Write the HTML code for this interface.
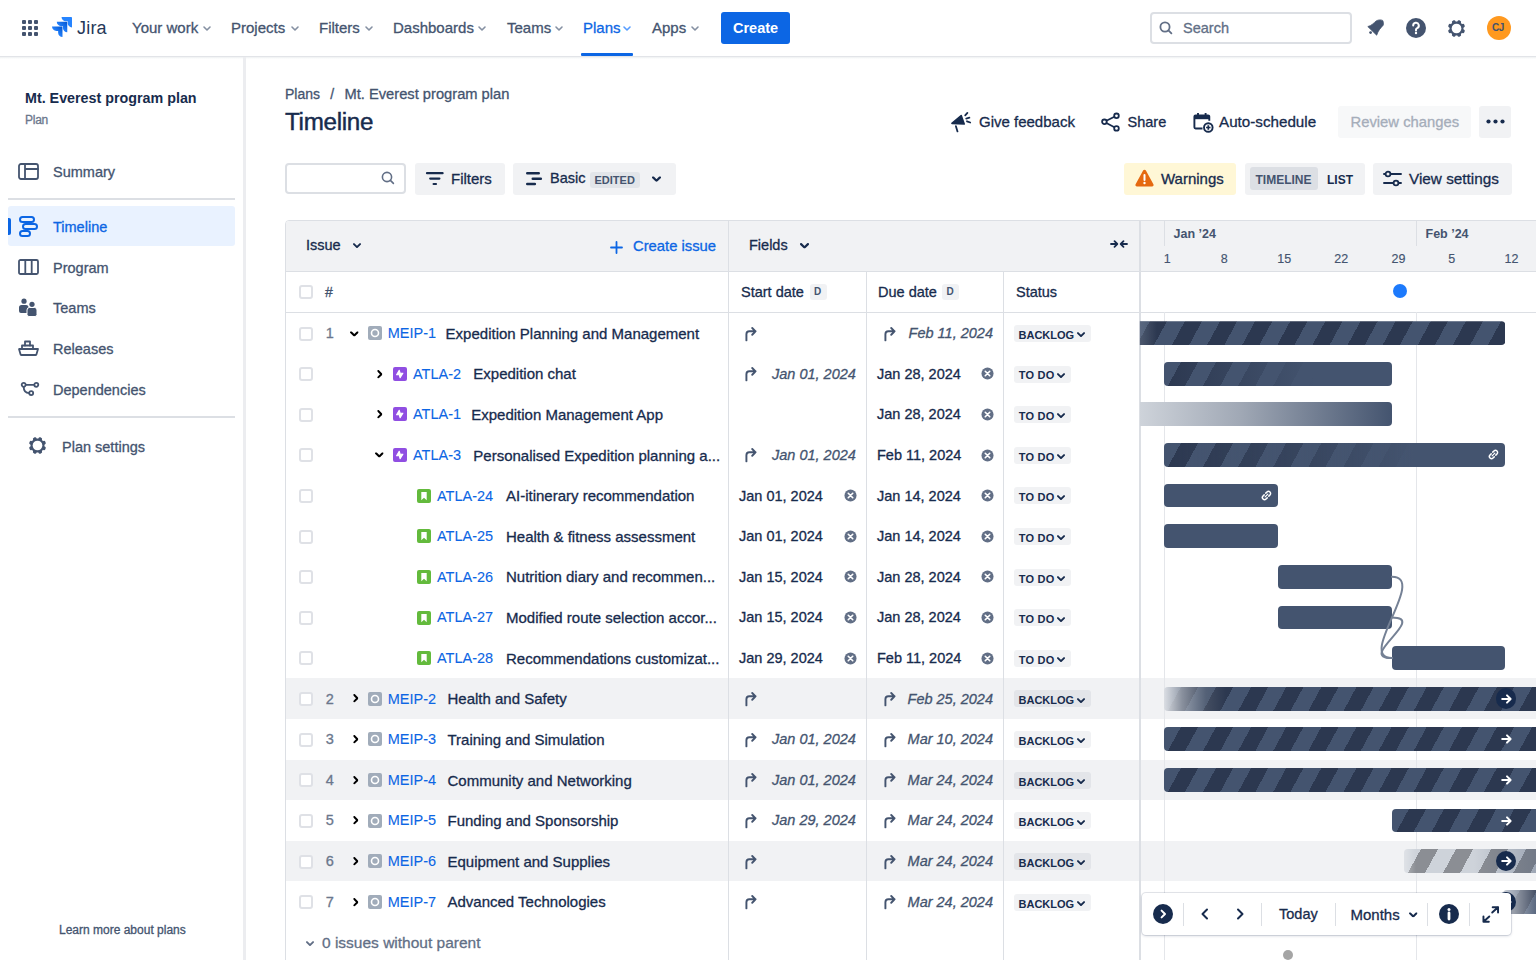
<!DOCTYPE html>
<html><head><meta charset="utf-8"><title>Timeline - Jira</title>
<style>
*{box-sizing:border-box;margin:0;padding:0}
html,body{width:1536px;height:960px;overflow:hidden;background:#fff}
body{font-family:"Liberation Sans",sans-serif;color:#172B4D;position:relative;font-size:14.5px}
.a{position:absolute;white-space:nowrap}
.t{position:absolute;white-space:nowrap;line-height:1;-webkit-text-stroke:0.3px currentColor}
svg{position:absolute;overflow:visible}
.nav{color:#44546F;font-size:15px}
.chev{stroke:#8590A2;stroke-width:1.6;fill:none;stroke-linecap:round;stroke-linejoin:round}
.ic{fill:none;stroke:#44546F;stroke-width:1.8;stroke-linecap:round;stroke-linejoin:round}
.side{color:#44546F;font-size:14.5px}
.btn{position:absolute;background:#F1F2F4;border-radius:3px}
.vl{position:absolute;width:1px;background:#DCDFE4}
.hl{position:absolute;height:1px;background:#DCDFE4}
.row{position:absolute;left:286px;width:1250px;height:40.62px}
.grey{background:#F1F2F4}
.cb{position:absolute;left:299px;width:14px;height:14px;border:2px solid #DFE1E6;border-radius:3px;background:#fff}
.num{color:#6B778C;font-size:14.5px}
.t[style*="bold"]{-webkit-text-stroke:0}
.key{color:#0C66E4;font-size:14.5px;-webkit-text-stroke:0.1px currentColor}
.sum{color:#172B4D;font-size:15px}
.date{color:#172B4D;font-size:14.5px}
.idate{color:#44546F;font-size:14.5px;font-style:italic}
.loz{position:absolute;left:1014px;height:17px;background:rgba(9,30,66,0.058);border-radius:3px;font-weight:bold;font-size:11px;color:#172B4D;letter-spacing:0.1px}
.bar{position:absolute;height:24px;border-radius:4px;background:#44546F}
.stripe{background-image:repeating-linear-gradient(118deg,#2C3850 0 15.55px,#44546F 15.55px 31.1px);background-attachment:fixed}
</style></head><body>

<svg width="0" height="0" style="position:absolute">
<defs>
<symbol id="chevd" viewBox="0 0 10 6"><path d="M1.2 1.2l3.8 3.8 3.8-3.8" fill="none" stroke="currentColor" stroke-width="2.4" stroke-linecap="round" stroke-linejoin="round"/></symbol>
<symbol id="chevr" viewBox="0 0 6 10"><path d="M1.2 1.2l3.8 3.8-3.8 3.8" fill="none" stroke="currentColor" stroke-width="2.4" stroke-linecap="round" stroke-linejoin="round"/></symbol>
<symbol id="redir" viewBox="0 0 14 16"><path d="M2.5 15V8.5a3 3 0 0 1 3-3h6.5M8.5 2l3.5 3.5-3.5 3.5" fill="none" stroke="#44546F" stroke-width="2" stroke-linecap="round" stroke-linejoin="round"/></symbol>
<symbol id="clr" viewBox="0 0 14 14"><circle cx="7" cy="7" r="6.5" fill="#626F86"/><path d="M4.6 4.6l4.8 4.8M9.4 4.6l-4.8 4.8" stroke="#fff" stroke-width="1.8" stroke-linecap="round"/></symbol>
<symbol id="init" viewBox="0 0 14 14"><rect width="14" height="14" rx="2" fill="#A1ACBA"/><circle cx="7" cy="7" r="3.5" fill="none" stroke="#fff" stroke-width="1.6"/></symbol>
<symbol id="epic" viewBox="0 0 14 14"><rect width="14" height="14" rx="2" fill="#904EE2"/><path d="M6.2 3.2L3.6 7.7H6.3L7.1 10.8L9.9 6.3H7.2z" fill="#fff" stroke="#fff" stroke-width="1.1" stroke-linejoin="round"/></symbol>
<symbol id="story" viewBox="0 0 14 14"><rect width="14" height="14" rx="2" fill="#63BA3C"/><path d="M4.3 3h5.4v8.2L7 8.8l-2.7 2.4z" fill="#fff"/></symbol>
<symbol id="gear" viewBox="0 0 20 20"><g fill="#44546F"><circle cx="10" cy="10" r="7.3"/><rect x="8" y="0.9" width="4" height="4.2" rx="1.6" transform="rotate(22.5 10 10)"/><rect x="8" y="0.9" width="4" height="4.2" rx="1.6" transform="rotate(67.5 10 10)"/><rect x="8" y="0.9" width="4" height="4.2" rx="1.6" transform="rotate(112.5 10 10)"/><rect x="8" y="0.9" width="4" height="4.2" rx="1.6" transform="rotate(157.5 10 10)"/><rect x="8" y="0.9" width="4" height="4.2" rx="1.6" transform="rotate(202.5 10 10)"/><rect x="8" y="0.9" width="4" height="4.2" rx="1.6" transform="rotate(247.5 10 10)"/><rect x="8" y="0.9" width="4" height="4.2" rx="1.6" transform="rotate(292.5 10 10)"/><rect x="8" y="0.9" width="4" height="4.2" rx="1.6" transform="rotate(337.5 10 10)"/></g><circle cx="10" cy="10" r="5.1" fill="#fff"/></symbol>
</defs>
</svg>

<!-- ========== TOP NAV ========== -->
<div class="a" style="left:0;top:55.5px;width:1536px;height:1.5px;background:#E2E4E8"></div>
<div class="a" style="left:0;top:57px;width:1536px;height:1.5px;background:linear-gradient(#EEF0F2,#fff)"></div>
<!-- app switcher -->
<svg style="left:22px;top:20px" width="16" height="16" viewBox="0 0 16 16" fill="#44546F">
<rect x="0" y="0" width="4" height="4" rx="1"/><rect x="6" y="0" width="4" height="4" rx="1"/><rect x="12" y="0" width="4" height="4" rx="1"/>
<rect x="0" y="6" width="4" height="4" rx="1"/><rect x="6" y="6" width="4" height="4" rx="1"/><rect x="12" y="6" width="4" height="4" rx="1"/>
<rect x="0" y="12" width="4" height="4" rx="1"/><rect x="6" y="12" width="4" height="4" rx="1"/><rect x="12" y="12" width="4" height="4" rx="1"/>
</svg>
<!-- jira logo -->
<svg style="left:52px;top:17px" width="20" height="20" viewBox="2 2 20 20">
<defs><linearGradient id="jg1" x1="1" y1="0" x2="0.4" y2="0.6"><stop offset="0" stop-color="#0052CC"/><stop offset="1" stop-color="#2684FF"/></linearGradient></defs>
<path fill="#2684FF" d="M11.53 2c0 2.4 1.97 4.35 4.35 4.35h1.78v1.7c0 2.4 1.94 4.34 4.34 4.35V2.84a.84.84 0 0 0-.84-.84H11.53z"/>
<path fill="url(#jg1)" d="M6.77 6.8a4.36 4.36 0 0 0 4.34 4.34h1.8v1.72a4.36 4.36 0 0 0 4.34 4.34V7.63a.84.84 0 0 0-.83-.83H6.77z"/>
<path fill="url(#jg1)" d="M2 11.6c0 2.4 1.95 4.34 4.35 4.34h1.78v1.72c.01 2.39 1.95 4.33 4.34 4.34v-9.57a.84.84 0 0 0-.84-.84H2z"/>
</svg>
<div class="t" style="left:77px;top:18.5px;font-size:18px;color:#253858;letter-spacing:0.2px;-webkit-text-stroke:0">Jira</div>

<div class="t nav" style="left:132px;top:20px">Your work</div>
<svg style="left:203px;top:26px" width="8" height="5" viewBox="0 0 8 5"><path class="chev" d="M1 1l3 3 3-3"/></svg>
<div class="t nav" style="left:231px;top:20px">Projects</div>
<svg style="left:291px;top:26px" width="8" height="5" viewBox="0 0 8 5"><path class="chev" d="M1 1l3 3 3-3"/></svg>
<div class="t nav" style="left:319px;top:20px">Filters</div>
<svg style="left:365px;top:26px" width="8" height="5" viewBox="0 0 8 5"><path class="chev" d="M1 1l3 3 3-3"/></svg>
<div class="t nav" style="left:393px;top:20px">Dashboards</div>
<svg style="left:478px;top:26px" width="8" height="5" viewBox="0 0 8 5"><path class="chev" d="M1 1l3 3 3-3"/></svg>
<div class="t nav" style="left:507px;top:20px">Teams</div>
<svg style="left:555px;top:26px" width="8" height="5" viewBox="0 0 8 5"><path class="chev" d="M1 1l3 3 3-3"/></svg>
<div class="t nav" style="left:583px;top:20px;color:#0C66E4">Plans</div>
<svg style="left:623px;top:26px" width="8" height="5" viewBox="0 0 8 5"><path class="chev" style="stroke:#579DFF" d="M1 1l3 3 3-3"/></svg>
<div class="a" style="left:581px;top:53px;width:52px;height:3px;background:#0C66E4;border-radius:1px"></div>
<div class="t nav" style="left:652px;top:20px">Apps</div>
<svg style="left:691px;top:26px" width="8" height="5" viewBox="0 0 8 5"><path class="chev" d="M1 1l3 3 3-3"/></svg>
<div class="a" style="left:721px;top:12px;width:69px;height:32px;background:#0C66E4;border-radius:3px"></div>
<div class="t" style="left:733px;top:21px;font-size:14.5px;font-weight:bold;color:#fff">Create</div>

<!-- search -->
<div class="a" style="left:1150px;top:12px;width:202px;height:32px;border:2px solid #DCDFE4;border-radius:4px;background:#fff"></div>
<svg style="left:1159px;top:21px" width="14" height="14" viewBox="0 0 14 14"><circle cx="6" cy="6" r="4.6" fill="none" stroke="#626F86" stroke-width="1.8"/><path d="M9.4 9.4l3 3" stroke="#626F86" stroke-width="1.8" stroke-linecap="round"/></svg>
<div class="t" style="left:1183px;top:21px;font-size:14.5px;color:#626F86">Search</div>
<!-- bell -->
<svg style="left:1362px;top:14px" width="28" height="28" viewBox="0 0 28 28"><path fill="#44546F" stroke="#44546F" stroke-width="0.8" stroke-linejoin="round" d="M5.8 12.6C9.5 11.6 11.8 9 14.2 6.9C16.5 5.6 19 5.7 20.6 6.4C21.5 7.8 21.6 9.5 21.2 11.2C19 13.6 16 16.5 14.7 21.2Z"/><circle cx="8.6" cy="18.6" r="1.4" fill="#44546F"/></svg>
<!-- help -->
<svg style="left:1406px;top:18px" width="20" height="20" viewBox="0 0 20 20"><circle cx="10" cy="10" r="10" fill="#44546F"/><path d="M7.2 7.6a2.8 2.8 0 1 1 4 2.5c-.8.4-1.2.9-1.2 1.7v.6" fill="none" stroke="#fff" stroke-width="2" stroke-linecap="round"/><circle cx="10" cy="15" r="1.2" fill="#fff"/></svg>
<!-- settings gear -->
<svg style="left:1446.5px;top:18.5px" width="19" height="19" viewBox="0 0 20 20"><use href="#gear"/></svg>
<!-- avatar -->
<div class="a" style="left:1487px;top:16px;width:24px;height:24px;border-radius:50%;background:#FF991F"></div>
<div class="t" style="left:1492px;top:23px;font-size:10px;font-weight:bold;color:#42526E;letter-spacing:-0.5px">CJ</div>

<!-- ========== SIDEBAR ========== -->
<div class="a" style="left:243px;top:57px;width:3px;height:903px;background:#ECEDF0"></div>
<div class="t" style="left:25px;top:91.1px;font-size:14.3px;font-weight:bold;color:#172B4D;-webkit-text-stroke:0">Mt. Everest program plan</div>
<div class="t" style="left:25px;top:114.2px;font-size:12px;letter-spacing:-0.25px;color:#6B778C">Plan</div>

<svg style="left:18px;top:163px" width="21" height="17" viewBox="0 0 21 17"><rect x="1" y="1" width="19" height="15" rx="2" class="ic" stroke-width="2"/><path d="M7 1v15M7 6h13" class="ic" stroke-width="2"/></svg>
<div class="t side" style="left:53px;top:164.8px">Summary</div>
<div class="a" style="left:8px;top:198px;width:227px;height:2px;background:#DCDFE4"></div>

<div class="a" style="left:8px;top:206px;width:227px;height:40px;background:#E9F2FF;border-radius:3px"></div>
<div class="a" style="left:8px;top:218px;width:3px;height:17px;background:#0C66E4;border-radius:0 2px 2px 0"></div>
<svg style="left:19px;top:216px" width="19" height="21" viewBox="0 0 19 21"><g fill="none" stroke="#0C66E4" stroke-width="2"><rect x="1" y="1" width="14" height="5" rx="2.5"/><rect x="4" y="8" width="14" height="5" rx="2.5"/><rect x="1" y="15" width="10" height="5" rx="2.5"/></g></svg>
<div class="t side" style="left:53px;top:219.8px;color:#0C66E4">Timeline</div>

<svg style="left:18px;top:259px" width="21" height="16" viewBox="0 0 21 16"><rect x="1" y="1" width="19" height="14" rx="1.5" class="ic" stroke-width="2"/><path d="M7.3 1v14M13.7 1v14" class="ic" stroke-width="2"/></svg>
<div class="t side" style="left:53px;top:260.8px">Program</div>

<svg style="left:19px;top:298px" width="19" height="19" viewBox="0 0 19 19" fill="#44546F"><circle cx="5" cy="3.2" r="2.6"/><circle cx="13" cy="6.3" r="2.6"/><path d="M0 9.5a2.5 2.5 0 0 1 2.5-2.5h4.5a2.5 2.5 0 0 1 2.5 2.5V15H2a2 2 0 0 1-2-2z"/><path d="M8 12a2.5 2.5 0 0 1 2.5-2.5h5A2.5 2.5 0 0 1 18 12v4.5a2 2 0 0 1-2 2h-6a2 2 0 0 1-2-2z" stroke="#fff" stroke-width="1"/></svg>
<div class="t side" style="left:53px;top:300.8px">Teams</div>

<svg style="left:18px;top:340px" width="21" height="16" viewBox="0 0 21 16"><g class="ic" stroke-width="2"><path d="M1 9h19l-1.6 5.5a1 1 0 0 1-1 .5H3.6a1 1 0 0 1-1-.5z"/><path d="M4 9V5.5h11V9"/><path d="M7 5.5V1.5h5v4"/></g></svg>
<div class="t side" style="left:53px;top:341.8px">Releases</div>

<svg style="left:20px;top:381px" width="19" height="15" viewBox="0 0 19 15"><g class="ic" stroke-width="1.8"><circle cx="3.7" cy="3.8" r="2"/><circle cx="16.3" cy="3.8" r="2"/><circle cx="11.2" cy="12.1" r="2"/><path d="M5.7 3.8h8.6M3.7 5.8C3.7 10 6 12.1 9.2 12.1"/></g></svg>
<div class="t side" style="left:53px;top:382.8px">Dependencies</div>
<div class="a" style="left:8px;top:415.5px;width:227px;height:2px;background:#DCDFE4"></div>

<svg style="left:27.8px;top:435.8px" width="19" height="19" viewBox="0 0 20 20"><use href="#gear"/></svg>
<div class="t side" style="left:62px;top:439.8px">Plan settings</div>

<div class="t" style="left:59px;top:924px;font-size:12px;color:#44546F">Learn more about plans</div>

<!-- ========== PAGE HEADER ========== -->
<div class="t" style="left:285px;top:87px;font-size:14px;color:#44546F">Plans</div>
<div class="t" style="left:330.2px;top:87px;font-size:14px;color:#44546F">/</div>
<div class="t" style="left:344.5px;top:87px;font-size:14.7px;color:#44546F">Mt. Everest program plan</div>
<div class="t" style="left:285px;top:110.3px;font-size:24.2px;color:#172B4D;letter-spacing:-0.3px;-webkit-text-stroke:0.45px #172B4D">Timeline</div>

<!-- megaphone -->
<svg style="left:940px;top:105px" width="35" height="35" viewBox="0 0 35 35"><path d="M11.9 18.4L21.2 10.6 24.2 19z" fill="#172B4D" stroke="#172B4D" stroke-width="1.6" stroke-linejoin="round"/><g stroke="#172B4D" stroke-width="1.8" stroke-linecap="round"><path d="M15.9 21.2l1.6 5.2"/><path d="M25.2 10.4l2.2-2.5M26.2 13.6l3.2-.9M27 16.3l3.2 1.2"/></g></svg>
<div class="t" style="left:979px;top:114px;font-size:15px;color:#172B4D">Give feedback</div>
<!-- share -->
<svg style="left:1101px;top:112px" width="20" height="20" viewBox="0 0 20 20"><g fill="none" stroke="#172B4D" stroke-width="1.8"><circle cx="15.5" cy="3.8" r="2.3"/><circle cx="3.4" cy="9.8" r="2.3"/><circle cx="15.5" cy="16.4" r="2.3"/><path d="M5.4 8.7l8-4M5.4 11l8 4.2"/></g></svg>
<div class="t" style="left:1127.5px;top:115px;font-size:14.5px;color:#172B4D">Share</div>
<!-- calendar plus -->
<svg style="left:1193px;top:112px" width="21" height="21" viewBox="0 0 21 21"><g fill="none" stroke="#172B4D" stroke-width="1.9"><path d="M9.5 16.5H2.6a1.2 1.2 0 0 1-1.2-1.2V4.6a1.2 1.2 0 0 1 1.2-1.2h12.5a1.2 1.2 0 0 1 1.2 1.2v4.2"/><path d="M5 1v3.2M12.6 1v3.2"/></g><path d="M1.5 4h15v3.2h-15z" fill="#172B4D"/><circle cx="15.3" cy="15.5" r="4.3" fill="none" stroke="#172B4D" stroke-width="1.9"/><path d="M15.3 13.3v4.4M13.1 15.5h4.4" stroke="#172B4D" stroke-width="1.7"/></svg>
<div class="t" style="left:1219px;top:114px;font-size:15.2px;color:#172B4D">Auto-schedule</div>
<div class="a" style="left:1338px;top:106px;width:133px;height:32px;background:#F7F8F9;border-radius:3px"></div>
<div class="t" style="left:1350.5px;top:115px;font-size:14.8px;color:#A5ADBA">Review changes</div>
<div class="a" style="left:1479px;top:106px;width:32px;height:32px;background:#F1F2F4;border-radius:3px"></div>
<svg style="left:1486px;top:119px" width="19" height="5" viewBox="0 0 19 5" fill="#172B4D"><circle cx="2.5" cy="2.5" r="2.1"/><circle cx="9.5" cy="2.5" r="2.1"/><circle cx="16.5" cy="2.5" r="2.1"/></svg>

<!-- toolbar -->
<div class="a" style="left:285px;top:163px;width:121px;height:31px;border:2px solid #DCDFE4;border-radius:4px;background:#fff"></div>
<svg style="left:381px;top:171px" width="14" height="14" viewBox="0 0 14 14"><circle cx="6" cy="6" r="4.6" fill="none" stroke="#626F86" stroke-width="1.6"/><path d="M9.4 9.4l3 3" stroke="#626F86" stroke-width="1.6" stroke-linecap="round"/></svg>
<div class="btn" style="left:415px;top:163px;width:90px;height:32px"></div>
<svg style="left:426px;top:171px" width="18" height="16" viewBox="0 0 18 16"><path d="M1 2.2h15.6M4.2 7.6h9.2M7.6 13h2.4" stroke="#172B4D" stroke-width="2.2" stroke-linecap="round"/></svg>
<div class="t" style="left:451px;top:170.6px;font-size:15px;color:#172B4D">Filters</div>
<div class="btn" style="left:513px;top:163px;width:163px;height:32px"></div>
<svg style="left:526px;top:171px" width="16" height="16" viewBox="0 0 16 16"><path d="M1.3 2.2h11.4M6.8 7.8h8M1.3 13h7.5" stroke="#172B4D" stroke-width="2.6" stroke-linecap="round"/></svg>
<div class="t" style="left:550px;top:170.6px;font-size:14.5px;color:#172B4D">Basic</div>
<div class="a" style="left:590px;top:172px;width:50px;height:16px;background:#DCDFE4;border-radius:3px;opacity:0.7"></div>
<div class="t" style="left:594.5px;top:175px;font-size:11px;font-weight:bold;color:#44546F">EDITED</div>
<svg style="left:652px;top:176px" width="9" height="6" viewBox="0 0 10 6"><use href="#chevd" style="color:#172B4D"/></svg>

<div class="a" style="left:1124px;top:163px;width:112px;height:32px;background:#FFF7D6;border-radius:3px"></div>
<svg style="left:1135px;top:169px" width="19" height="18" viewBox="0 0 19 18"><path d="M8.1 1.6a1.6 1.6 0 0 1 2.8 0l7.5 13.6a1.6 1.6 0 0 1-1.4 2.4H2a1.6 1.6 0 0 1-1.4-2.4z" fill="#E56910"/><path d="M9.5 6v5" stroke="#fff" stroke-width="2" stroke-linecap="round"/><circle cx="9.5" cy="14" r="1.2" fill="#fff"/></svg>
<div class="t" style="left:1161px;top:170.8px;font-size:15px;color:#172B4D">Warnings</div>
<div class="btn" style="left:1244.5px;top:163px;width:120px;height:32px"></div>
<div class="a" style="left:1249.5px;top:167px;width:68px;height:23px;background:#DCDFE4;border-radius:3px"></div>
<div class="t" style="left:1255.5px;top:173.6px;font-size:12px;font-weight:bold;color:#44546F">TIMELINE</div>
<div class="t" style="left:1327px;top:173.6px;font-size:12px;font-weight:bold;color:#172B4D">LIST</div>
<div class="btn" style="left:1372.5px;top:163px;width:139px;height:32px"></div>
<svg style="left:1383px;top:170px" width="19" height="17" viewBox="0 0 19 17"><g fill="none" stroke="#172B4D" stroke-width="1.9" stroke-linecap="round"><path d="M1 4h17M1 13h17"/></g><circle cx="5" cy="4" r="2.4" fill="#F1F2F4" stroke="#172B4D" stroke-width="1.8"/><circle cx="13" cy="13" r="2.4" fill="#F1F2F4" stroke="#172B4D" stroke-width="1.8"/></svg>
<div class="t" style="left:1409px;top:170.6px;font-size:15.3px;color:#172B4D">View settings</div>
<!--PAGEHEADER-->
<!-- ========== TABLE ========== -->
<div class="a" style="left:285px;top:220px;width:1260px;height:760px;border:1px solid #DCDFE4;border-radius:4px 0 0 0"></div>
<div class="a" style="left:286px;top:221px;width:1250px;height:50px;background:#F1F2F4;border-radius:3px 0 0 0"></div>
<div class="hl" style="left:286px;top:270.5px;width:1250px;height:1.5px"></div>
<div class="hl" style="left:286px;top:312px;width:853px"></div>
<div class="hl" style="left:1139px;top:312px;width:397px"></div>
<div class="row grey" style="top:678.38px"></div>
<div class="row grey" style="top:759.62px"></div>
<div class="row grey" style="top:840.86px"></div>
<div class="vl" style="left:727.6px;top:221px;height:739px"></div>
<div class="vl" style="left:865.5px;top:271px;height:689px"></div>
<div class="vl" style="left:1002.5px;top:271px;height:689px"></div>
<div class="vl" style="left:1139px;top:221px;height:739px;width:1.5px;background:#DCDFE4"></div>
<div class="vl" style="left:1164px;top:221px;height:25px"></div>
<div class="vl" style="left:1416px;top:221px;height:25px"></div>
<div class="vl" style="left:1164px;top:312px;height:648px;background:#E4E6EA"></div>
<div class="vl" style="left:1416px;top:312px;height:648px;background:#E4E6EA"></div>
<div class="t" style="left:306px;top:238.32px;font-size:14.5px;color:#172B4D">Issue</div>
<svg style="left:353px;top:243px" width="8" height="5" viewBox="0 0 10 6"><use href="#chevd" style="color:#172B4D"/></svg>
<svg style="left:610px;top:241px" width="13" height="13" viewBox="0 0 13 13"><path d="M6.5 1v11M1 6.5h11" stroke="#0C66E4" stroke-width="1.8" stroke-linecap="round"/></svg>
<div class="t" style="left:633px;top:239.27px;font-size:14.8px;color:#0C66E4">Create issue</div>
<div class="t" style="left:749px;top:238.32px;font-size:14.5px;color:#172B4D">Fields</div>
<svg style="left:800px;top:243px" width="9" height="5.5" viewBox="0 0 10 6"><use href="#chevd" style="color:#172B4D"/></svg>
<svg style="left:1110px;top:240px" width="18" height="8" viewBox="0 0 18 8"><g fill="none" stroke="#172B4D" stroke-width="1.8" stroke-linecap="round" stroke-linejoin="round"><path d="M1 4h6M4.5 1.2L7.3 4 4.5 6.8M17 4h-6M13.5 1.2L10.7 4l2.8 2.8"/></g></svg>
<div class="cb" style="top:284.5px"></div>
<div class="t" style="left:325px;top:284.66px;font-size:14px;color:#44546F">#</div>
<div class="t" style="left:741px;top:284.92px;font-size:14.5px;color:#172B4D">Start date</div>
<div class="a" style="left:809.5px;top:283.5px;width:17px;height:16px;background:#F1F2F4;border-radius:3px"></div>
<div class="t" style="left:814px;top:286.62px;font-size:10px;font-weight:bold;color:#44546F">D</div>
<div class="t" style="left:878px;top:284.92px;font-size:14.5px;color:#172B4D">Due date</div>
<div class="a" style="left:942px;top:283.5px;width:16.5px;height:16px;background:#F1F2F4;border-radius:3px"></div>
<div class="t" style="left:946.5px;top:286.62px;font-size:10px;font-weight:bold;color:#44546F">D</div>
<div class="t" style="left:1016px;top:284.92px;font-size:14.5px;color:#172B4D">Status</div>
<div class="t" style="left:1173.5px;top:227.89px;font-size:12.5px;font-weight:bold;color:#44546F">Jan ’24</div>
<div class="t" style="left:1425.5px;top:227.89px;font-size:12.5px;font-weight:bold;color:#44546F">Feb ’24</div>
<div class="t" style="left:1163.7px;top:253.29px;font-size:12.5px;color:#44546F;-webkit-text-stroke:0.15px #44546F">1</div>
<div class="t" style="left:1220.7px;top:253.29px;font-size:12.5px;color:#44546F;-webkit-text-stroke:0.15px #44546F">8</div>
<div class="t" style="left:1277.2px;top:253.29px;font-size:12.5px;color:#44546F;-webkit-text-stroke:0.15px #44546F">15</div>
<div class="t" style="left:1334.2px;top:253.29px;font-size:12.5px;color:#44546F;-webkit-text-stroke:0.15px #44546F">22</div>
<div class="t" style="left:1391.5px;top:253.29px;font-size:12.5px;color:#44546F;-webkit-text-stroke:0.15px #44546F">29</div>
<div class="t" style="left:1448.2px;top:253.29px;font-size:12.5px;color:#44546F;-webkit-text-stroke:0.15px #44546F">5</div>
<div class="t" style="left:1504.5px;top:253.29px;font-size:12.5px;color:#44546F;-webkit-text-stroke:0.15px #44546F">12</div>
<div class="a" style="left:1392.6px;top:284px;width:14.4px;height:14.4px;border-radius:50%;background:#1D7AFC"></div>
<div class="cb" style="top:326.50px"></div>
<div class="t num" style="left:325.8px;top:326.02px">1</div>
<svg style="left:350px;top:330.50px" width="8.6" height="5.6" viewBox="0 0 10 6"><use href="#chevd" style="color:#000"/></svg>
<svg style="left:368px;top:326.20px" width="14" height="14" viewBox="0 0 14 14"><use href="#init"/></svg>
<div class="t key" style="left:387.7px;top:326.02px">MEIP-1</div>
<div class="t sum" style="left:445.6px;top:325.77px">Expedition Planning and Management</div>
<svg style="left:744px;top:325.60px" width="13.5" height="15.5" viewBox="0 0 14 16"><use href="#redir"/></svg>
<svg style="left:882.5px;top:325.60px" width="13.5" height="15.5" viewBox="0 0 14 16"><use href="#redir"/></svg>
<div class="t idate" style="right:543px;top:326.02px">Feb 11, 2024</div>
<div class="loz" style="top:324.90px;width:77px"></div>
<div class="t" style="left:1018.5px;top:329.83px;font-size:11px;font-weight:bold;color:#172B4D;-webkit-text-stroke:0;letter-spacing:0px">BACKLOG</div>
<svg style="left:1077.2px;top:332.20px" width="8" height="5" viewBox="0 0 10 6"><use href="#chevd" style="color:#172B4D"/></svg>
<div class="cb" style="top:367.12px"></div>
<svg style="left:376.7px;top:369.52px" width="5.5" height="8.4" viewBox="0 0 6 10"><use href="#chevr" style="color:#000"/></svg>
<svg style="left:392.5px;top:366.82px" width="14" height="14" viewBox="0 0 14 14"><use href="#epic"/></svg>
<div class="t key" style="left:413px;top:366.64px">ATLA-2</div>
<div class="t sum" style="left:473.3px;top:366.39px">Expedition chat</div>
<svg style="left:744px;top:366.22px" width="13.5" height="15.5" viewBox="0 0 14 16"><use href="#redir"/></svg>
<div class="t idate" style="left:772px;top:366.64px">Jan 01, 2024</div>
<div class="t date" style="left:877px;top:366.64px">Jan 28, 2024</div>
<svg style="left:981px;top:367.32px" width="13" height="13" viewBox="0 0 14 14"><use href="#clr"/></svg>
<div class="loz" style="top:365.52px;width:57px"></div>
<div class="t" style="left:1018.8px;top:370.45px;font-size:11px;font-weight:bold;color:#172B4D;-webkit-text-stroke:0;letter-spacing:0.2px">TO DO</div>
<svg style="left:1057px;top:372.82px" width="8" height="5" viewBox="0 0 10 6"><use href="#chevd" style="color:#172B4D"/></svg>
<div class="cb" style="top:407.74px"></div>
<svg style="left:376.7px;top:410.14px" width="5.5" height="8.4" viewBox="0 0 6 10"><use href="#chevr" style="color:#000"/></svg>
<svg style="left:392.5px;top:407.44px" width="14" height="14" viewBox="0 0 14 14"><use href="#epic"/></svg>
<div class="t key" style="left:413px;top:407.26px">ATLA-1</div>
<div class="t sum" style="left:471.2px;top:407.01px">Expedition Management App</div>
<div class="t date" style="left:877px;top:407.26px">Jan 28, 2024</div>
<svg style="left:981px;top:407.94px" width="13" height="13" viewBox="0 0 14 14"><use href="#clr"/></svg>
<div class="loz" style="top:406.14px;width:57px"></div>
<div class="t" style="left:1018.8px;top:411.07px;font-size:11px;font-weight:bold;color:#172B4D;-webkit-text-stroke:0;letter-spacing:0.2px">TO DO</div>
<svg style="left:1057px;top:413.44px" width="8" height="5" viewBox="0 0 10 6"><use href="#chevd" style="color:#172B4D"/></svg>
<div class="cb" style="top:448.36px"></div>
<svg style="left:374.5px;top:452.36px" width="8.6" height="5.6" viewBox="0 0 10 6"><use href="#chevd" style="color:#000"/></svg>
<svg style="left:392.5px;top:448.06px" width="14" height="14" viewBox="0 0 14 14"><use href="#epic"/></svg>
<div class="t key" style="left:413px;top:447.88px">ATLA-3</div>
<div class="t sum" style="left:473.3px;top:447.63px">Personalised Expedition planning a...</div>
<svg style="left:744px;top:447.46px" width="13.5" height="15.5" viewBox="0 0 14 16"><use href="#redir"/></svg>
<div class="t idate" style="left:772px;top:447.88px">Jan 01, 2024</div>
<div class="t date" style="left:877px;top:447.88px">Feb 11, 2024</div>
<svg style="left:981px;top:448.56px" width="13" height="13" viewBox="0 0 14 14"><use href="#clr"/></svg>
<div class="loz" style="top:446.76px;width:57px"></div>
<div class="t" style="left:1018.8px;top:451.69px;font-size:11px;font-weight:bold;color:#172B4D;-webkit-text-stroke:0;letter-spacing:0.2px">TO DO</div>
<svg style="left:1057px;top:454.06px" width="8" height="5" viewBox="0 0 10 6"><use href="#chevd" style="color:#172B4D"/></svg>
<div class="cb" style="top:488.98px"></div>
<svg style="left:416.6px;top:488.68px" width="14" height="14" viewBox="0 0 14 14"><use href="#story"/></svg>
<div class="t key" style="left:437px;top:488.5px">ATLA-24</div>
<div class="t sum" style="left:506px;top:488.25px">AI-itinerary recommendation</div>
<div class="t date" style="left:739px;top:488.5px">Jan 01, 2024</div>
<svg style="left:843.8px;top:489.18px" width="13" height="13" viewBox="0 0 14 14"><use href="#clr"/></svg>
<div class="t date" style="left:877px;top:488.5px">Jan 14, 2024</div>
<svg style="left:981px;top:489.18px" width="13" height="13" viewBox="0 0 14 14"><use href="#clr"/></svg>
<div class="loz" style="top:487.38px;width:57px"></div>
<div class="t" style="left:1018.8px;top:492.31px;font-size:11px;font-weight:bold;color:#172B4D;-webkit-text-stroke:0;letter-spacing:0.2px">TO DO</div>
<svg style="left:1057px;top:494.68px" width="8" height="5" viewBox="0 0 10 6"><use href="#chevd" style="color:#172B4D"/></svg>
<div class="cb" style="top:529.60px"></div>
<svg style="left:416.6px;top:529.30px" width="14" height="14" viewBox="0 0 14 14"><use href="#story"/></svg>
<div class="t key" style="left:437px;top:529.12px">ATLA-25</div>
<div class="t sum" style="left:506px;top:528.87px">Health &amp; fitness assessment</div>
<div class="t date" style="left:739px;top:529.12px">Jan 01, 2024</div>
<svg style="left:843.8px;top:529.80px" width="13" height="13" viewBox="0 0 14 14"><use href="#clr"/></svg>
<div class="t date" style="left:877px;top:529.12px">Jan 14, 2024</div>
<svg style="left:981px;top:529.80px" width="13" height="13" viewBox="0 0 14 14"><use href="#clr"/></svg>
<div class="loz" style="top:528.00px;width:57px"></div>
<div class="t" style="left:1018.8px;top:532.93px;font-size:11px;font-weight:bold;color:#172B4D;-webkit-text-stroke:0;letter-spacing:0.2px">TO DO</div>
<svg style="left:1057px;top:535.30px" width="8" height="5" viewBox="0 0 10 6"><use href="#chevd" style="color:#172B4D"/></svg>
<div class="cb" style="top:570.22px"></div>
<svg style="left:416.6px;top:569.92px" width="14" height="14" viewBox="0 0 14 14"><use href="#story"/></svg>
<div class="t key" style="left:437px;top:569.74px">ATLA-26</div>
<div class="t sum" style="left:506px;top:569.49px">Nutrition diary and recommen...</div>
<div class="t date" style="left:739px;top:569.74px">Jan 15, 2024</div>
<svg style="left:843.8px;top:570.42px" width="13" height="13" viewBox="0 0 14 14"><use href="#clr"/></svg>
<div class="t date" style="left:877px;top:569.74px">Jan 28, 2024</div>
<svg style="left:981px;top:570.42px" width="13" height="13" viewBox="0 0 14 14"><use href="#clr"/></svg>
<div class="loz" style="top:568.62px;width:57px"></div>
<div class="t" style="left:1018.8px;top:573.55px;font-size:11px;font-weight:bold;color:#172B4D;-webkit-text-stroke:0;letter-spacing:0.2px">TO DO</div>
<svg style="left:1057px;top:575.92px" width="8" height="5" viewBox="0 0 10 6"><use href="#chevd" style="color:#172B4D"/></svg>
<div class="cb" style="top:610.84px"></div>
<svg style="left:416.6px;top:610.54px" width="14" height="14" viewBox="0 0 14 14"><use href="#story"/></svg>
<div class="t key" style="left:437px;top:610.36px">ATLA-27</div>
<div class="t sum" style="left:506px;top:610.11px">Modified route selection accor...</div>
<div class="t date" style="left:739px;top:610.36px">Jan 15, 2024</div>
<svg style="left:843.8px;top:611.04px" width="13" height="13" viewBox="0 0 14 14"><use href="#clr"/></svg>
<div class="t date" style="left:877px;top:610.36px">Jan 28, 2024</div>
<svg style="left:981px;top:611.04px" width="13" height="13" viewBox="0 0 14 14"><use href="#clr"/></svg>
<div class="loz" style="top:609.24px;width:57px"></div>
<div class="t" style="left:1018.8px;top:614.17px;font-size:11px;font-weight:bold;color:#172B4D;-webkit-text-stroke:0;letter-spacing:0.2px">TO DO</div>
<svg style="left:1057px;top:616.54px" width="8" height="5" viewBox="0 0 10 6"><use href="#chevd" style="color:#172B4D"/></svg>
<div class="cb" style="top:651.46px"></div>
<svg style="left:416.6px;top:651.16px" width="14" height="14" viewBox="0 0 14 14"><use href="#story"/></svg>
<div class="t key" style="left:437px;top:650.98px">ATLA-28</div>
<div class="t sum" style="left:506px;top:650.73px">Recommendations customizat...</div>
<div class="t date" style="left:739px;top:650.98px">Jan 29, 2024</div>
<svg style="left:843.8px;top:651.66px" width="13" height="13" viewBox="0 0 14 14"><use href="#clr"/></svg>
<div class="t date" style="left:877px;top:650.98px">Feb 11, 2024</div>
<svg style="left:981px;top:651.66px" width="13" height="13" viewBox="0 0 14 14"><use href="#clr"/></svg>
<div class="loz" style="top:649.86px;width:57px"></div>
<div class="t" style="left:1018.8px;top:654.79px;font-size:11px;font-weight:bold;color:#172B4D;-webkit-text-stroke:0;letter-spacing:0.2px">TO DO</div>
<svg style="left:1057px;top:657.16px" width="8" height="5" viewBox="0 0 10 6"><use href="#chevd" style="color:#172B4D"/></svg>
<div class="cb" style="top:692.08px"></div>
<div class="t num" style="left:325.8px;top:691.6px">2</div>
<svg style="left:352.5px;top:694.48px" width="5.5" height="8.4" viewBox="0 0 6 10"><use href="#chevr" style="color:#000"/></svg>
<svg style="left:368px;top:691.78px" width="14" height="14" viewBox="0 0 14 14"><use href="#init"/></svg>
<div class="t key" style="left:387.7px;top:691.6px">MEIP-2</div>
<div class="t sum" style="left:447.5px;top:691.35px">Health and Safety</div>
<svg style="left:744px;top:691.18px" width="13.5" height="15.5" viewBox="0 0 14 16"><use href="#redir"/></svg>
<svg style="left:882.5px;top:691.18px" width="13.5" height="15.5" viewBox="0 0 14 16"><use href="#redir"/></svg>
<div class="t idate" style="right:543px;top:691.6px">Feb 25, 2024</div>
<div class="loz" style="top:690.48px;width:77px"></div>
<div class="t" style="left:1018.5px;top:695.41px;font-size:11px;font-weight:bold;color:#172B4D;-webkit-text-stroke:0;letter-spacing:0px">BACKLOG</div>
<svg style="left:1077.2px;top:697.78px" width="8" height="5" viewBox="0 0 10 6"><use href="#chevd" style="color:#172B4D"/></svg>
<div class="cb" style="top:732.70px"></div>
<div class="t num" style="left:325.8px;top:732.22px">3</div>
<svg style="left:352.5px;top:735.10px" width="5.5" height="8.4" viewBox="0 0 6 10"><use href="#chevr" style="color:#000"/></svg>
<svg style="left:368px;top:732.40px" width="14" height="14" viewBox="0 0 14 14"><use href="#init"/></svg>
<div class="t key" style="left:387.7px;top:732.22px">MEIP-3</div>
<div class="t sum" style="left:447.5px;top:731.97px">Training and Simulation</div>
<svg style="left:744px;top:731.80px" width="13.5" height="15.5" viewBox="0 0 14 16"><use href="#redir"/></svg>
<div class="t idate" style="left:772px;top:732.22px">Jan 01, 2024</div>
<svg style="left:882.5px;top:731.80px" width="13.5" height="15.5" viewBox="0 0 14 16"><use href="#redir"/></svg>
<div class="t idate" style="right:543px;top:732.22px">Mar 10, 2024</div>
<div class="loz" style="top:731.10px;width:77px"></div>
<div class="t" style="left:1018.5px;top:736.03px;font-size:11px;font-weight:bold;color:#172B4D;-webkit-text-stroke:0;letter-spacing:0px">BACKLOG</div>
<svg style="left:1077.2px;top:738.40px" width="8" height="5" viewBox="0 0 10 6"><use href="#chevd" style="color:#172B4D"/></svg>
<div class="cb" style="top:773.32px"></div>
<div class="t num" style="left:325.8px;top:772.84px">4</div>
<svg style="left:352.5px;top:775.72px" width="5.5" height="8.4" viewBox="0 0 6 10"><use href="#chevr" style="color:#000"/></svg>
<svg style="left:368px;top:773.02px" width="14" height="14" viewBox="0 0 14 14"><use href="#init"/></svg>
<div class="t key" style="left:387.7px;top:772.84px">MEIP-4</div>
<div class="t sum" style="left:447.5px;top:772.59px">Community and Networking</div>
<svg style="left:744px;top:772.42px" width="13.5" height="15.5" viewBox="0 0 14 16"><use href="#redir"/></svg>
<div class="t idate" style="left:772px;top:772.84px">Jan 01, 2024</div>
<svg style="left:882.5px;top:772.42px" width="13.5" height="15.5" viewBox="0 0 14 16"><use href="#redir"/></svg>
<div class="t idate" style="right:543px;top:772.84px">Mar 24, 2024</div>
<div class="loz" style="top:771.72px;width:77px"></div>
<div class="t" style="left:1018.5px;top:776.65px;font-size:11px;font-weight:bold;color:#172B4D;-webkit-text-stroke:0;letter-spacing:0px">BACKLOG</div>
<svg style="left:1077.2px;top:779.02px" width="8" height="5" viewBox="0 0 10 6"><use href="#chevd" style="color:#172B4D"/></svg>
<div class="cb" style="top:813.94px"></div>
<div class="t num" style="left:325.8px;top:813.46px">5</div>
<svg style="left:352.5px;top:816.34px" width="5.5" height="8.4" viewBox="0 0 6 10"><use href="#chevr" style="color:#000"/></svg>
<svg style="left:368px;top:813.64px" width="14" height="14" viewBox="0 0 14 14"><use href="#init"/></svg>
<div class="t key" style="left:387.7px;top:813.46px">MEIP-5</div>
<div class="t sum" style="left:447.5px;top:813.21px">Funding and Sponsorship</div>
<svg style="left:744px;top:813.04px" width="13.5" height="15.5" viewBox="0 0 14 16"><use href="#redir"/></svg>
<div class="t idate" style="left:772px;top:813.46px">Jan 29, 2024</div>
<svg style="left:882.5px;top:813.04px" width="13.5" height="15.5" viewBox="0 0 14 16"><use href="#redir"/></svg>
<div class="t idate" style="right:543px;top:813.46px">Mar 24, 2024</div>
<div class="loz" style="top:812.34px;width:77px"></div>
<div class="t" style="left:1018.5px;top:817.27px;font-size:11px;font-weight:bold;color:#172B4D;-webkit-text-stroke:0;letter-spacing:0px">BACKLOG</div>
<svg style="left:1077.2px;top:819.64px" width="8" height="5" viewBox="0 0 10 6"><use href="#chevd" style="color:#172B4D"/></svg>
<div class="cb" style="top:854.56px"></div>
<div class="t num" style="left:325.8px;top:854.08px">6</div>
<svg style="left:352.5px;top:856.96px" width="5.5" height="8.4" viewBox="0 0 6 10"><use href="#chevr" style="color:#000"/></svg>
<svg style="left:368px;top:854.26px" width="14" height="14" viewBox="0 0 14 14"><use href="#init"/></svg>
<div class="t key" style="left:387.7px;top:854.08px">MEIP-6</div>
<div class="t sum" style="left:447.5px;top:853.83px">Equipment and Supplies</div>
<svg style="left:744px;top:853.66px" width="13.5" height="15.5" viewBox="0 0 14 16"><use href="#redir"/></svg>
<svg style="left:882.5px;top:853.66px" width="13.5" height="15.5" viewBox="0 0 14 16"><use href="#redir"/></svg>
<div class="t idate" style="right:543px;top:854.08px">Mar 24, 2024</div>
<div class="loz" style="top:852.96px;width:77px"></div>
<div class="t" style="left:1018.5px;top:857.89px;font-size:11px;font-weight:bold;color:#172B4D;-webkit-text-stroke:0;letter-spacing:0px">BACKLOG</div>
<svg style="left:1077.2px;top:860.26px" width="8" height="5" viewBox="0 0 10 6"><use href="#chevd" style="color:#172B4D"/></svg>
<div class="cb" style="top:895.18px"></div>
<div class="t num" style="left:325.8px;top:894.7px">7</div>
<svg style="left:352.5px;top:897.58px" width="5.5" height="8.4" viewBox="0 0 6 10"><use href="#chevr" style="color:#000"/></svg>
<svg style="left:368px;top:894.88px" width="14" height="14" viewBox="0 0 14 14"><use href="#init"/></svg>
<div class="t key" style="left:387.7px;top:894.7px">MEIP-7</div>
<div class="t sum" style="left:447.5px;top:894.45px">Advanced Technologies</div>
<svg style="left:744px;top:894.28px" width="13.5" height="15.5" viewBox="0 0 14 16"><use href="#redir"/></svg>
<svg style="left:882.5px;top:894.28px" width="13.5" height="15.5" viewBox="0 0 14 16"><use href="#redir"/></svg>
<div class="t idate" style="right:543px;top:894.7px">Mar 24, 2024</div>
<div class="loz" style="top:893.58px;width:77px"></div>
<div class="t" style="left:1018.5px;top:898.51px;font-size:11px;font-weight:bold;color:#172B4D;-webkit-text-stroke:0;letter-spacing:0px">BACKLOG</div>
<svg style="left:1077.2px;top:900.88px" width="8" height="5" viewBox="0 0 10 6"><use href="#chevd" style="color:#172B4D"/></svg>
<svg style="left:305.5px;top:940.70px" width="8" height="5" viewBox="0 0 10 6"><use href="#chevd" style="color:#626F86"/></svg>
<div class="t" style="left:322px;top:935.33px;font-size:15.5px;color:#626F86">0 issues without parent</div>

<!--TABLEEND-->
<!-- ========== BARS ========== -->
<div class="a" style="left:1133.2px;top:321.20px;width:372.10px;height:23.8px;border-radius:0;background:linear-gradient(90deg,rgba(120,132,150,.45) 6px,rgba(68,84,111,0) 24px),repeating-linear-gradient(118.5deg,#44546F 0 14.85px,#2C3850 14.85px 29.95px,#44546F 29.95px 30.86px);clip-path:inset(0 0 0 6.7px round 0 4px 4px 0)"></div>
<div class="a" style="left:1164.1px;top:361.82px;width:227.90px;height:23.8px;border-radius:4px;background:linear-gradient(90deg,rgba(68,84,111,0) 0,rgba(68,84,111,.6) 90px,#44546F 150px),repeating-linear-gradient(118.5deg,#44546F 0 14.85px,#2C3850 14.85px 29.95px,#44546F 29.95px 30.86px);"></div>
<div class="a" style="left:1140px;top:402.44px;width:252.00px;height:23.8px;border-radius:0 4px 4px 0;background:linear-gradient(90deg,#CED3DA 0%,#A0A8B5 40%,#44546F 100%);"></div>
<div class="a" style="left:1164.1px;top:443.06px;width:341.20px;height:23.8px;border-radius:4px;background:linear-gradient(90deg,rgba(68,84,111,0) 0,rgba(68,84,111,.5) 150px,#44546F 250px),repeating-linear-gradient(118.5deg,#44546F 0 14.85px,#2C3850 14.85px 29.95px,#44546F 29.95px 30.86px);"></div>
<div class="a" style="left:1164.1px;top:483.68px;width:113.90px;height:23.8px;border-radius:4px;background:#44546F;"></div>
<div class="a" style="left:1164.1px;top:524.30px;width:113.90px;height:23.8px;border-radius:4px;background:#44546F;"></div>
<div class="a" style="left:1278px;top:564.92px;width:113.80px;height:23.8px;border-radius:4px;background:#44546F;"></div>
<div class="a" style="left:1278px;top:605.54px;width:113.80px;height:23.8px;border-radius:4px;background:#44546F;"></div>
<div class="a" style="left:1392.2px;top:646.16px;width:113.10px;height:23.8px;border-radius:4px;background:#44546F;"></div>
<div class="a" style="left:1164.2px;top:686.78px;width:380.80px;height:23.8px;border-radius:4px 0 0 4px;background:linear-gradient(90deg,rgba(235,237,240,.9) 0,rgba(200,204,210,.6) 18px,rgba(120,126,136,.3) 42px,rgba(68,84,111,0) 62px),repeating-linear-gradient(118.5deg,#44546F 0 14.85px,#2C3850 14.85px 29.95px,#44546F 29.95px 30.86px);"></div>
<div class="a" style="left:1164.1px;top:727.40px;width:380.90px;height:23.8px;border-radius:4px 0 0 4px;background:repeating-linear-gradient(118.5deg,#44546F 0 14.85px,#2C3850 14.85px 29.95px,#44546F 29.95px 30.86px);"></div>
<div class="a" style="left:1164.1px;top:768.02px;width:380.90px;height:23.8px;border-radius:4px 0 0 4px;background:repeating-linear-gradient(118.5deg,#44546F 0 14.85px,#2C3850 14.85px 29.95px,#44546F 29.95px 30.86px);"></div>
<div class="a" style="left:1392.1px;top:808.64px;width:152.90px;height:23.8px;border-radius:4px 0 0 4px;background:repeating-linear-gradient(118.5deg,#44546F 0 14.85px,#2C3850 14.85px 29.95px,#44546F 29.95px 30.86px);"></div>
<div class="a" style="left:1404.2px;top:849.26px;width:140.80px;height:23.8px;border-radius:4px 0 0 4px;background:linear-gradient(90deg,rgba(255,255,255,.35) 0,rgba(255,255,255,0) 12px,rgba(68,84,111,0) 70px,rgba(68,84,111,.35) 132px),repeating-linear-gradient(118.5deg,#CED3DA 0 14.85px,#8B8E94 14.85px 29.95px,#CED3DA 29.95px 30.86px);"></div>
<div class="a" style="left:1503px;top:889.88px;width:42.00px;height:23.8px;border-radius:4px 0 0 4px;background:linear-gradient(90deg,rgba(255,255,255,.7) 0,rgba(255,255,255,0) 40px),repeating-linear-gradient(118.5deg,#44546F 0 14.85px,#2C3850 14.85px 29.95px,#44546F 29.95px 30.86px);"></div>
<svg style="left:1487.8px;top:449.46px" width="11" height="11" viewBox="0 0 12 12"><g fill="none" stroke="#fff" stroke-width="1.6" stroke-linecap="round"><path d="M5.2 3.4l1.3-1.3a2.3 2.3 0 0 1 3.3 3.3L8.5 6.7"/><path d="M6.8 8.6L5.5 9.9a2.3 2.3 0 0 1-3.3-3.3L3.5 5.3"/><path d="M4.5 7.5l3-3" stroke-width="1.3"/></g></svg>
<svg style="left:1260.5px;top:490.08px" width="11" height="11" viewBox="0 0 12 12"><g fill="none" stroke="#fff" stroke-width="1.6" stroke-linecap="round"><path d="M5.2 3.4l1.3-1.3a2.3 2.3 0 0 1 3.3 3.3L8.5 6.7"/><path d="M6.8 8.6L5.5 9.9a2.3 2.3 0 0 1-3.3-3.3L3.5 5.3"/><path d="M4.5 7.5l3-3" stroke-width="1.3"/></g></svg>
<div class="a" style="left:1496.10px;top:688.48px;width:20.4px;height:20.4px;border-radius:50%;background:#172B4D"></div>
<svg style="left:1500.80px;top:693.68px" width="11" height="10" viewBox="0 0 11 10"><g fill="none" stroke="#fff" stroke-width="2" stroke-linecap="round" stroke-linejoin="round"><path d="M1.2 5h8.3M6 1.4L9.6 5 6 8.6"/></g></svg>
<svg style="left:1500.80px;top:734.30px" width="11" height="10" viewBox="0 0 11 10"><g fill="none" stroke="#fff" stroke-width="2" stroke-linecap="round" stroke-linejoin="round"><path d="M1.2 5h8.3M6 1.4L9.6 5 6 8.6"/></g></svg>
<svg style="left:1500.80px;top:774.92px" width="11" height="10" viewBox="0 0 11 10"><g fill="none" stroke="#fff" stroke-width="2" stroke-linecap="round" stroke-linejoin="round"><path d="M1.2 5h8.3M6 1.4L9.6 5 6 8.6"/></g></svg>
<svg style="left:1500.80px;top:815.54px" width="11" height="10" viewBox="0 0 11 10"><g fill="none" stroke="#fff" stroke-width="2" stroke-linecap="round" stroke-linejoin="round"><path d="M1.2 5h8.3M6 1.4L9.6 5 6 8.6"/></g></svg>
<div class="a" style="left:1496.10px;top:850.96px;width:20.4px;height:20.4px;border-radius:50%;background:#172B4D"></div>
<svg style="left:1500.80px;top:856.16px" width="11" height="10" viewBox="0 0 11 10"><g fill="none" stroke="#fff" stroke-width="2" stroke-linecap="round" stroke-linejoin="round"><path d="M1.2 5h8.3M6 1.4L9.6 5 6 8.6"/></g></svg>
<div class="a" style="left:1496.10px;top:891.58px;width:20.4px;height:20.4px;border-radius:50%;background:#172B4D"></div>
<svg style="left:1500.80px;top:896.78px" width="11" height="10" viewBox="0 0 11 10"><g fill="none" stroke="#fff" stroke-width="2" stroke-linecap="round" stroke-linejoin="round"><path d="M1.2 5h8.3M6 1.4L9.6 5 6 8.6"/></g></svg>
<svg style="left:0;top:0" width="1536" height="960"><g fill="none" stroke="#758195" stroke-width="2" stroke-linecap="round"><path d="M1391.9 576.8 C1428 576.8, 1356 658.1, 1391.9 658.1"/><path d="M1391.9 617.4 C1428 617.4, 1356 658.1, 1391.9 658.1"/></g></svg>
<div class="a" style="left:1141.7px;top:893px;width:369.5px;height:41.7px;background:#fff;border-radius:4px;box-shadow:0 0 0 1px rgba(9,30,66,.10),0 1px 3px rgba(9,30,66,.18)"></div>
<svg style="left:1153px;top:904px" width="20" height="20" viewBox="0 0 20 20"><circle cx="10" cy="10" r="10" fill="#172B4D"/><path d="M8.6 6.6L12 10l-3.4 3.4" fill="none" stroke="#fff" stroke-width="2" stroke-linecap="round" stroke-linejoin="round"/></svg>
<div class="a" style="left:1182.9px;top:903px;width:1px;height:22.6px;background:#DCDFE4"></div>
<div class="a" style="left:1261.3px;top:903px;width:1px;height:22.6px;background:#DCDFE4"></div>
<div class="a" style="left:1335.2px;top:903px;width:1px;height:22.6px;background:#DCDFE4"></div>
<div class="a" style="left:1427.2px;top:903px;width:1px;height:22.6px;background:#DCDFE4"></div>
<div class="a" style="left:1468.8px;top:903px;width:1px;height:22.6px;background:#DCDFE4"></div>
<svg style="left:1200px;top:908px" width="9" height="12" viewBox="0 0 9 12"><path d="M7 1.5L2.5 6 7 10.5" fill="none" stroke="#172B4D" stroke-width="2" stroke-linecap="round" stroke-linejoin="round"/></svg>
<svg style="left:1236px;top:908px" width="9" height="12" viewBox="0 0 9 12"><path d="M2 1.5L6.5 6 2 10.5" fill="none" stroke="#172B4D" stroke-width="2" stroke-linecap="round" stroke-linejoin="round"/></svg>
<div class="t" style="left:1279px;top:907px;font-size:14.5px;color:#172B4D">Today</div>
<div class="t" style="left:1350.5px;top:907px;font-size:15px;color:#172B4D">Months</div>
<svg style="left:1409px;top:911.5px" width="8.5" height="5.5" viewBox="0 0 10 6"><use href="#chevd" style="color:#172B4D"/></svg>
<svg style="left:1438.5px;top:904px" width="20" height="20" viewBox="0 0 20 20"><circle cx="10" cy="10" r="10" fill="#172B4D"/><circle cx="10" cy="5.6" r="1.5" fill="#fff"/><path d="M10 9v6" stroke="#fff" stroke-width="2.8" stroke-linecap="round"/></svg>
<svg style="left:1481.5px;top:905.5px" width="17.5" height="17" viewBox="0 0 18 17"><g fill="none" stroke="#172B4D" stroke-width="2" stroke-linecap="round" stroke-linejoin="round"><path d="M10.5 6.5L16.5 1M11 1h5.5v5.5M7.5 10.5L1.5 16M7 16H1.5v-5.5"/></g></svg>
<div class="a" style="left:1283px;top:950px;width:10px;height:10px;border-radius:50%;background:#A5A5A5"></div>

<!--BARSEND-->
</body></html>
